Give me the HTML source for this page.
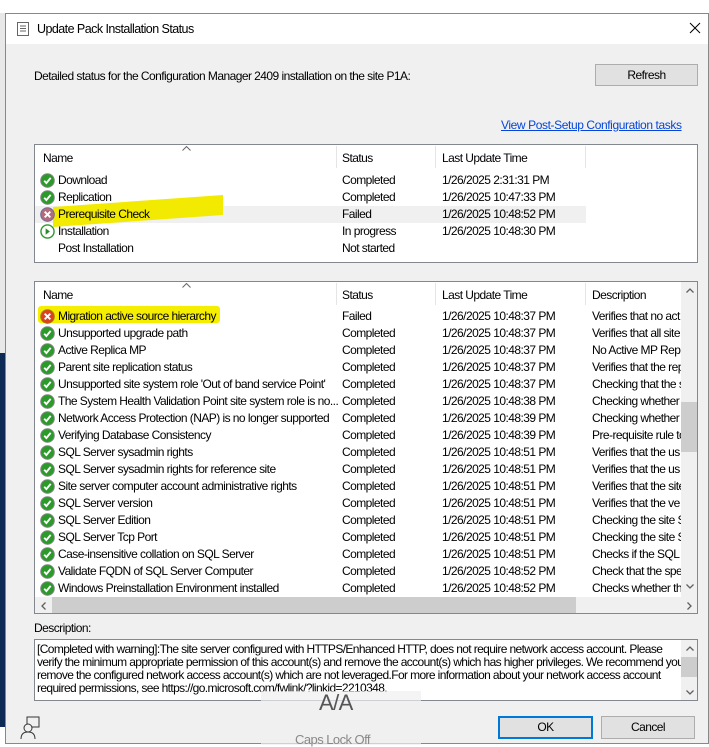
<!DOCTYPE html>
<html><head><style>
*{margin:0;padding:0;box-sizing:border-box}
body{width:709px;height:744px;overflow:hidden;background:#fff;font-family:"Liberation Sans",sans-serif;font-size:12px;color:#000;position:relative;letter-spacing:-0.55px}
.a{position:absolute;white-space:nowrap}
.win{position:absolute;left:5px;top:13px;width:704px;height:731px;background:#f0f0f0;border:1px solid #888}
.title{position:absolute;left:0;top:0;width:100%;height:30px;background:#fff}
.box{position:absolute;background:#fff;border:1px solid #828790;overflow:hidden}
.row{position:absolute;left:0;height:17px;line-height:17px;width:100%}
.row span{position:absolute}
.ic{position:absolute;left:5px;top:1px;width:15px;height:15px}
.hdr{position:absolute;top:0;left:0;height:24px;line-height:24px;width:100%}
.sep{position:absolute;top:0;width:1px;height:22px;background:#e5e5e5}
.btn{position:absolute;background:#e1e1e1;border:1px solid #adadad;text-align:center;line-height:20px}
</style></head><body>
<div class="a" style="left:0;top:13px;width:5px;height:340px;background:#e8e8e8"></div>
<div class="a" style="left:0;top:353px;width:5px;height:374px;background:#0d2a55"></div>
<div class="win">
 <div class="title">
  <svg class="a" style="left:10px;top:8px" width="14" height="14" viewBox="0 0 14 14"><rect x="1.5" y="0.5" width="11" height="13" fill="#fff" stroke="#666"/><path d="M4 4h6M4 6.5h6M4 9h6" stroke="#666"/></svg>
  <div class="a" style="left:31px;top:8px;font-size:12.5px">Update Pack Installation Status</div>
  <svg class="a" style="left:683px;top:8px" width="12" height="12" viewBox="0 0 12 12"><path d="M1 1l10 10M11 1L1 11" stroke="#000" stroke-width="1"/></svg>
 </div>
 <div class="a" style="left:28px;top:55px">Detailed status for the Configuration Manager 2409 installation on the site P1A:</div>
 <div class="btn" style="left:589px;top:50px;width:103px;height:22px">Refresh</div>
 <div class="a" style="left:495px;top:104px;color:#0645d8;text-decoration:underline;letter-spacing:-0.4px">View Post-Setup Configuration tasks</div>

 <div class="box" style="left:28px;top:130px;width:664px;height:119px">
  <div class="hdr" style="top:1px"><span class="a" style="left:8px;top:0">Name</span><span class="a" style="left:307px">Status</span><span class="a" style="left:407px">Last Update Time</span>
  <div class="sep" style="left:301px"></div><div class="sep" style="left:400px"></div><div class="sep" style="left:550px"></div></div>
  <svg class="a" style="left:147px;top:1px" width="9" height="5" viewBox="0 0 9 5"><path d="M0.5 4.5l4-4 4 4" stroke="#666" fill="none"/></svg>
  <div class="row" style="top:27px"><svg class="ic" viewBox="0 0 16 16"><circle cx="8" cy="8" r="7.3" fill="#2b9a2b" stroke="#888"/><path d="M4.5 8.3l2.3 2.5 4.6-5.6" stroke="#fff" stroke-width="2" fill="none"/></svg><span style="left:23px">Download</span><span style="left:307px">Completed</span><span style="left:407px">1/26/2025 2:31:31 PM</span></div>
  <div class="row" style="top:44px"><svg class="ic" viewBox="0 0 16 16"><circle cx="8" cy="8" r="7.3" fill="#2b9a2b" stroke="#888"/><path d="M4.5 8.3l2.3 2.5 4.6-5.6" stroke="#fff" stroke-width="2" fill="none"/></svg><span style="left:23px">Replication</span><span style="left:307px">Completed</span><span style="left:407px">1/26/2025 10:47:33 PM</span></div>
  <div class="row" style="top:61px;background:#f0f0f0;width:551px"><div class="a" style="left:18px;top:-5px;width:170px;height:20px;background:#f2ea00;transform:skewY(-4deg)"></div><svg class="ic" viewBox="0 0 16 16"><circle cx="8" cy="8" r="7.3" fill="#b46a7a" stroke="#6a6a9a"/><path d="M5 5l6 6M11 5l-6 6" stroke="#fff" stroke-width="2"/></svg><span style="left:23px">Prerequisite Check</span><span style="left:307px">Failed</span><span style="left:407px">1/26/2025 10:48:52 PM</span></div>
  <div class="row" style="top:78px"><svg class="ic" viewBox="0 0 16 16"><circle cx="8" cy="8" r="7" fill="#fff" stroke="#2b9a2b" stroke-width="1.5"/><path d="M6 4.5l4.5 3.5L6 11.5z" fill="#2b8a2b"/></svg><span style="left:23px">Installation</span><span style="left:307px">In progress</span><span style="left:407px">1/26/2025 10:48:30 PM</span></div>
  <div class="row" style="top:95px"><span style="left:23px">Post Installation</span><span style="left:307px">Not started</span></div>
 </div>

 <div class="box" style="left:28px;top:267px;width:664px;height:333px" id="b2">
  <div class="hdr" style="top:1px"><span class="a" style="left:8px">Name</span><span class="a" style="left:307px">Status</span><span class="a" style="left:407px">Last Update Time</span><span class="a" style="left:557px">Description</span>
  <div class="sep" style="left:301px"></div><div class="sep" style="left:400px"></div><div class="sep" style="left:550px"></div></div>
  <svg class="a" style="left:147px;top:1px" width="9" height="5" viewBox="0 0 9 5"><path d="M0.5 4.5l4-4 4 4" stroke="#666" fill="none"/></svg>
  <div class="a" style="left:3px;top:24px;width:182px;height:17px;background:#f5ee00;border-radius:3px"></div>
  <div id="rows"></div>
  <div class="a" style="left:646px;top:0;width:17px;height:315px;background:#f0f0f0"></div>
  <div class="a" style="left:646px;top:120px;width:17px;height:50px;background:#cdcdcd"></div>
  <svg class="a" style="left:651px;top:6px" width="8" height="5" viewBox="0 0 8 5"><path d="M0.5 4.5l3.5-3.5 3.5 3.5" stroke="#606060" fill="none" stroke-width="1.3"/></svg>
  <svg class="a" style="left:651px;top:302px" width="8" height="5" viewBox="0 0 8 5"><path d="M0.5 0.5l3.5 3.5 3.5-3.5" stroke="#606060" fill="none" stroke-width="1.3"/></svg>
  <div class="a" style="left:0;top:315px;width:663px;height:17px;background:#f0f0f0"></div>
  <div class="a" style="left:17px;top:315px;width:524px;height:17px;background:#cdcdcd"></div>
  <svg class="a" style="left:6px;top:320px" width="5" height="8" viewBox="0 0 5 8"><path d="M4.5 0.5L1 4l3.5 3.5" stroke="#606060" fill="none" stroke-width="1.3"/></svg>
  <svg class="a" style="left:652px;top:320px" width="5" height="8" viewBox="0 0 5 8"><path d="M0.5 0.5L4 4 0.5 7.5" stroke="#606060" fill="none" stroke-width="1.3"/></svg>
 </div>

 <div class="a" style="left:28px;top:607px">Description:</div>
 <div class="box" style="left:28px;top:625px;width:664px;height:62px;line-height:13px;padding:3px 0 0 2px;white-space:nowrap;letter-spacing:-0.62px">[Completed with warning]:The site server configured with HTTPS/Enhanced HTTP, does not require network access account. Please<br>verify the minimum appropriate permission of this account(s) and remove the account(s) which has higher privileges. We recommend you<br>remove the configured network access account(s) which are not leveraged.For more information about your network access account<br>required permissions, see https://go.microsoft.com/fwlink/?linkid=2210348.
  <div class="a" style="left:646px;top:0;width:17px;height:60px;background:#f0f0f0"></div>
  <div class="a" style="left:646px;top:17px;width:17px;height:20px;background:#cdcdcd"></div>
  <svg class="a" style="left:651px;top:6px" width="8" height="5" viewBox="0 0 8 5"><path d="M0.5 4.5l3.5-3.5 3.5 3.5" stroke="#606060" fill="none" stroke-width="1.3"/></svg>
  <svg class="a" style="left:651px;top:50px" width="8" height="5" viewBox="0 0 8 5"><path d="M0.5 0.5l3.5 3.5 3.5-3.5" stroke="#606060" fill="none" stroke-width="1.3"/></svg>
 </div>
 <div class="a" style="left:255px;top:677px;width:160px;height:54px;background:rgba(240,240,240,.7)"></div>
 <div class="a" style="left:313px;top:676px;font-size:22px;color:#555">A/A</div>
 <div class="a" style="left:289px;top:718px;font-size:13px;color:#888">Caps Lock Off</div>
 <svg class="a" style="left:14px;top:702px" width="22" height="24" viewBox="0 0 22 24"><rect x="7" y="1" width="12" height="10" fill="none" stroke="#333"/><circle cx="8" cy="12" r="4" fill="#f0f0f0" stroke="#333"/><path d="M1 23c0-5 3-7 7-7s7 2 7 7" fill="none" stroke="#333"/></svg>
 <div class="btn" style="left:492px;top:702px;width:95px;height:23px;border:2px solid #0078d7;line-height:19px">OK</div>
 <div class="btn" style="left:595px;top:702px;width:94px;height:23px">Cancel</div>
</div>
<script>
var d=[["x","Migration active source hierarchy","Failed","10:48:37","Verifies that no act"],
["c","Unsupported upgrade path","Completed","10:48:37","Verifies that all site"],
["c","Active Replica MP","Completed","10:48:37","No Active MP Rep"],
["c","Parent site replication status","Completed","10:48:37","Verifies that the rep"],
["c","Unsupported site system role 'Out of band service Point'","Completed","10:48:37","Checking that the s"],
["c","The System Health Validation Point site system role is no...","Completed","10:48:38","Checking whether"],
["c","Network Access Protection (NAP) is no longer supported","Completed","10:48:39","Checking whether"],
["c","Verifying Database Consistency","Completed","10:48:39","Pre-requisite rule to"],
["c","SQL Server sysadmin rights","Completed","10:48:51","Verifies that the us"],
["c","SQL Server sysadmin rights for reference site","Completed","10:48:51","Verifies that the us"],
["c","Site server computer account administrative rights","Completed","10:48:51","Verifies that the site"],
["c","SQL Server version","Completed","10:48:51","Verifies that the ve"],
["c","SQL Server Edition","Completed","10:48:51","Checking the site S"],
["c","SQL Server Tcp Port","Completed","10:48:51","Checking the site S"],
["c","Case-insensitive collation on SQL Server","Completed","10:48:51","Checks if the SQL"],
["c","Validate FQDN of SQL Server Computer","Completed","10:48:52","Check that the spe"],
["c","Windows Preinstallation Environment installed","Completed","10:48:52","Checks whether th"]];
var h="";
var ck='<svg class="ic" viewBox="0 0 16 16"><circle cx="8" cy="8" r="7.3" fill="#2b9a2b" stroke="#888"/><path d="M4.5 8.3l2.3 2.5 4.6-5.6" stroke="#fff" stroke-width="2" fill="none"/></svg>';
var xx='<svg class="ic" viewBox="0 0 16 16"><circle cx="8" cy="8" r="7.3" fill="#e04020" stroke="#a08000"/><path d="M5 5l6 6M11 5l-6 6" stroke="#fff" stroke-width="2"/></svg>';
d.forEach(function(r,i){h+='<div class="row" style="top:'+(26+i*17)+'px">'+(r[0]=="c"?ck:xx)+'<span style="left:23px">'+r[1].replace(/'/g,"&#39;")+'</span><span style="left:307px">'+r[2]+'</span><span style="left:407px">1/26/2025 '+r[3]+' PM</span><span style="left:557px">'+r[4]+'</span></div>';});
document.getElementById("rows").innerHTML=h;
</script>
</body></html>
